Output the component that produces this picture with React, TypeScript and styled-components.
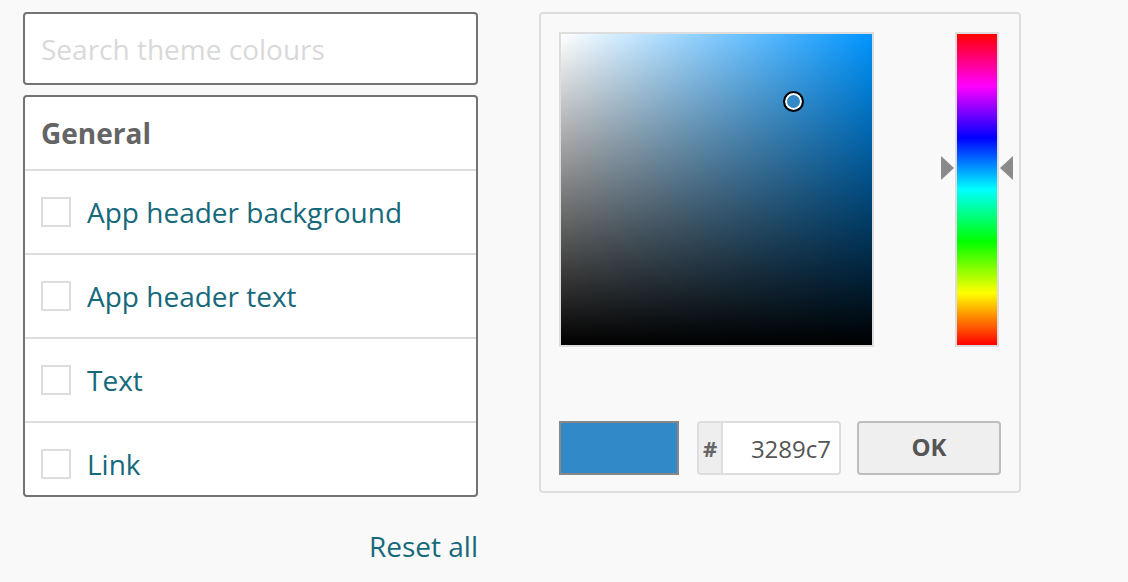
import React, { useState } from "react";
import styled, { createGlobalStyle } from "styled-components";

const colors = {
  page: "#f9f9f9",
  frame: "#737373",
  line: "#dddddd",
  link: "#16697a",
  heading: "#646464",
  dark: "#555555",
};

const GlobalStyle = createGlobalStyle`
  html, body {
    margin: 0;
    padding: 0;
    background: ${colors.page};
    font-family: "Open Sans", "Liberation Sans", sans-serif;
  }
  * { box-sizing: border-box; }
`;

const Page = styled.div`
  display: flex;
  align-items: flex-start;
  gap: 61px;
  padding: 12px 0 0 23px;
  height: 582px;
`;

const Column = styled.div`
  display: flex;
  flex-direction: column;
  width: 455px;
`;

const Search = styled.input`
  height: 73px;
  border: 2px solid ${colors.frame};
  border-radius: 4px;
  background: #fff;
  padding: 0 16px;
  font: 28px "Open Sans", sans-serif;
  color: #333;
  outline: none;
  &::placeholder {
    color: #d9d9d9;
  }
`;

const List = styled.div`
  margin-top: 10px;
  height: 402px;
  overflow: hidden;
  border: 2px solid ${colors.frame};
  border-radius: 4px;
  background: #fff;
`;

const GroupHeader = styled.div`
  height: 72px;
  display: flex;
  align-items: center;
  padding: 0 16px;
  font-size: 28px;
  font-weight: 700;
  color: ${colors.heading};
`;

const Row = styled.label`
  height: 84px;
  display: flex;
  align-items: center;
  gap: 16px;
  padding: 0 16px;
  border-top: 2px solid ${colors.line};
  font-size: 28px;
  color: ${colors.link};
  cursor: pointer;
`;

const Check = styled.span`
  width: 30px;
  height: 30px;
  flex-shrink: 0;
  border: 2px solid ${colors.line};
  background: #fff;
`;

const ResetLink = styled.a`
  align-self: flex-end;
  margin-top: 30px;
  font-size: 28px;
  line-height: 38px;
  color: ${colors.link};
  text-decoration: none;
`;

const Panel = styled.div`
  width: 482px;
  height: 481px;
  border: 2px solid ${colors.line};
  border-radius: 4px;
  padding: 18px 18px 16px 18px;
  display: flex;
  flex-direction: column;
  justify-content: space-between;
`;

const PickerArea = styled.div`
  display: flex;
  justify-content: space-between;
`;

const SatBox = styled.div<{ $hue: number }>`
  position: relative;
  width: 315px;
  height: 315px;
  border: 2px solid ${colors.line};
  background: linear-gradient(to top, #000, rgba(0, 0, 0, 0)),
    linear-gradient(to right, #fff, rgba(255, 255, 255, 0)),
    hsl(${(p) => p.$hue}, 100%, 50%);
`;

const Marker = styled.span`
  position: absolute;
  width: 21px;
  height: 21px;
  margin: -11px 0 0 -11px;
  border-radius: 50%;
  border: 2px solid #000;
  box-shadow: inset 0 0 0 2px #fff;
`;

const HueTrack = styled.div`
  position: relative;
  width: 44px;
  height: 315px;
  margin-right: 2px;
  border: 2px solid ${colors.line};
`;

const HueFill = styled.div`
  width: 100%;
  height: 100%;
  background: linear-gradient(
    to bottom,
    #ff0000 0%,
    #ff00ff 16.67%,
    #0000ff 33.33%,
    #00ffff 50%,
    #00ff00 66.67%,
    #ffff00 83.33%,
    #ff0000 100%
  );
`;

const Arrow = styled.span<{ $side: "left" | "right" }>`
  position: absolute;
  width: 0;
  height: 0;
  margin-top: -12px;
  border-top: 12px solid transparent;
  border-bottom: 12px solid transparent;
  ${(p) =>
    p.$side === "left"
      ? `left: -16px; border-left: 13px solid #8a8a8a;`
      : `right: -16px; border-right: 13px solid #8a8a8a;`}
`;

const Controls = styled.div`
  display: flex;
  align-items: center;
  gap: 18px;
`;

const Swatch = styled.div<{ $color: string }>`
  width: 120px;
  height: 54px;
  flex-shrink: 0;
  border: 2px solid #888;
  background: ${(p) => p.$color};
`;

const HexField = styled.div`
  display: flex;
  width: 144px;
  height: 54px;
  flex-shrink: 0;
  border: 2px solid ${colors.line};
  border-radius: 4px;
  overflow: hidden;
  background: #fff;
`;

const HexPrefix = styled.span`
  width: 24px;
  display: flex;
  align-items: center;
  justify-content: center;
  background: #eeeeee;
  border-right: 2px solid ${colors.line};
  font-size: 22px;
  font-weight: 700;
  color: #666;
`;

const HexInput = styled.input`
  flex: 1;
  min-width: 0;
  border: none;
  outline: none;
  padding: 0 8px 0 0;
  text-align: right;
  font: 24px "Open Sans", sans-serif;
  color: ${colors.dark};
`;

const OkButton = styled.button`
  margin-left: -2px;
  width: 144px;
  height: 54px;
  flex-shrink: 0;
  border: 2px solid #bdbdbd;
  border-radius: 4px;
  background: #efefef;
  font: 700 24px "Open Sans", sans-serif;
  color: ${colors.dark};
  padding: 0 0 4px;
`;

function hexToHsv(hex: string) {
  const n = parseInt(hex, 16);
  const r = ((n >> 16) & 255) / 255;
  const g = ((n >> 8) & 255) / 255;
  const b = (n & 255) / 255;
  const max = Math.max(r, g, b);
  const min = Math.min(r, g, b);
  const d = max - min;
  let h = 0;
  if (d) {
    if (max === r) h = ((g - b) / d) % 6;
    else if (max === g) h = (b - r) / d + 2;
    else h = (r - g) / d + 4;
    h *= 60;
    if (h < 0) h += 360;
  }
  return { h, s: max ? d / max : 0, v: max };
}

const items = ["App header background", "App header text", "Text", "Link"];

export default function App() {
  const [hex, setHex] = useState("3289c7");
  const { h, s, v } = hexToHsv(/^[0-9a-f]{6}$/i.test(hex) ? hex : "3289c7");
  const huePos = `${(1 - h / 360) * 100}%`;

  return (
    <>
      <GlobalStyle />
      <Page>
        <Column>
          <Search placeholder="Search theme colours" />
          <List>
            <GroupHeader>General</GroupHeader>
            {items.map((item) => (
              <Row key={item}>
                <Check />
                {item}
              </Row>
            ))}
          </List>
          <ResetLink href="#">Reset all</ResetLink>
        </Column>
        <Panel>
          <PickerArea>
            <SatBox $hue={h}>
              <Marker style={{ left: `${s * 100}%`, top: `${(1 - v) * 100}%`, background: `#${hex}` }} />
            </SatBox>
            <HueTrack>
              <HueFill />
              <Arrow $side="left" style={{ top: huePos }} />
              <Arrow $side="right" style={{ top: huePos }} />
            </HueTrack>
          </PickerArea>
          <Controls>
            <Swatch $color={`#${hex}`} />
            <HexField>
              <HexPrefix>#</HexPrefix>
              <HexInput value={hex} onChange={(e) => setHex(e.target.value)} />
            </HexField>
            <OkButton>OK</OkButton>
          </Controls>
        </Panel>
      </Page>
    </>
  );
}
